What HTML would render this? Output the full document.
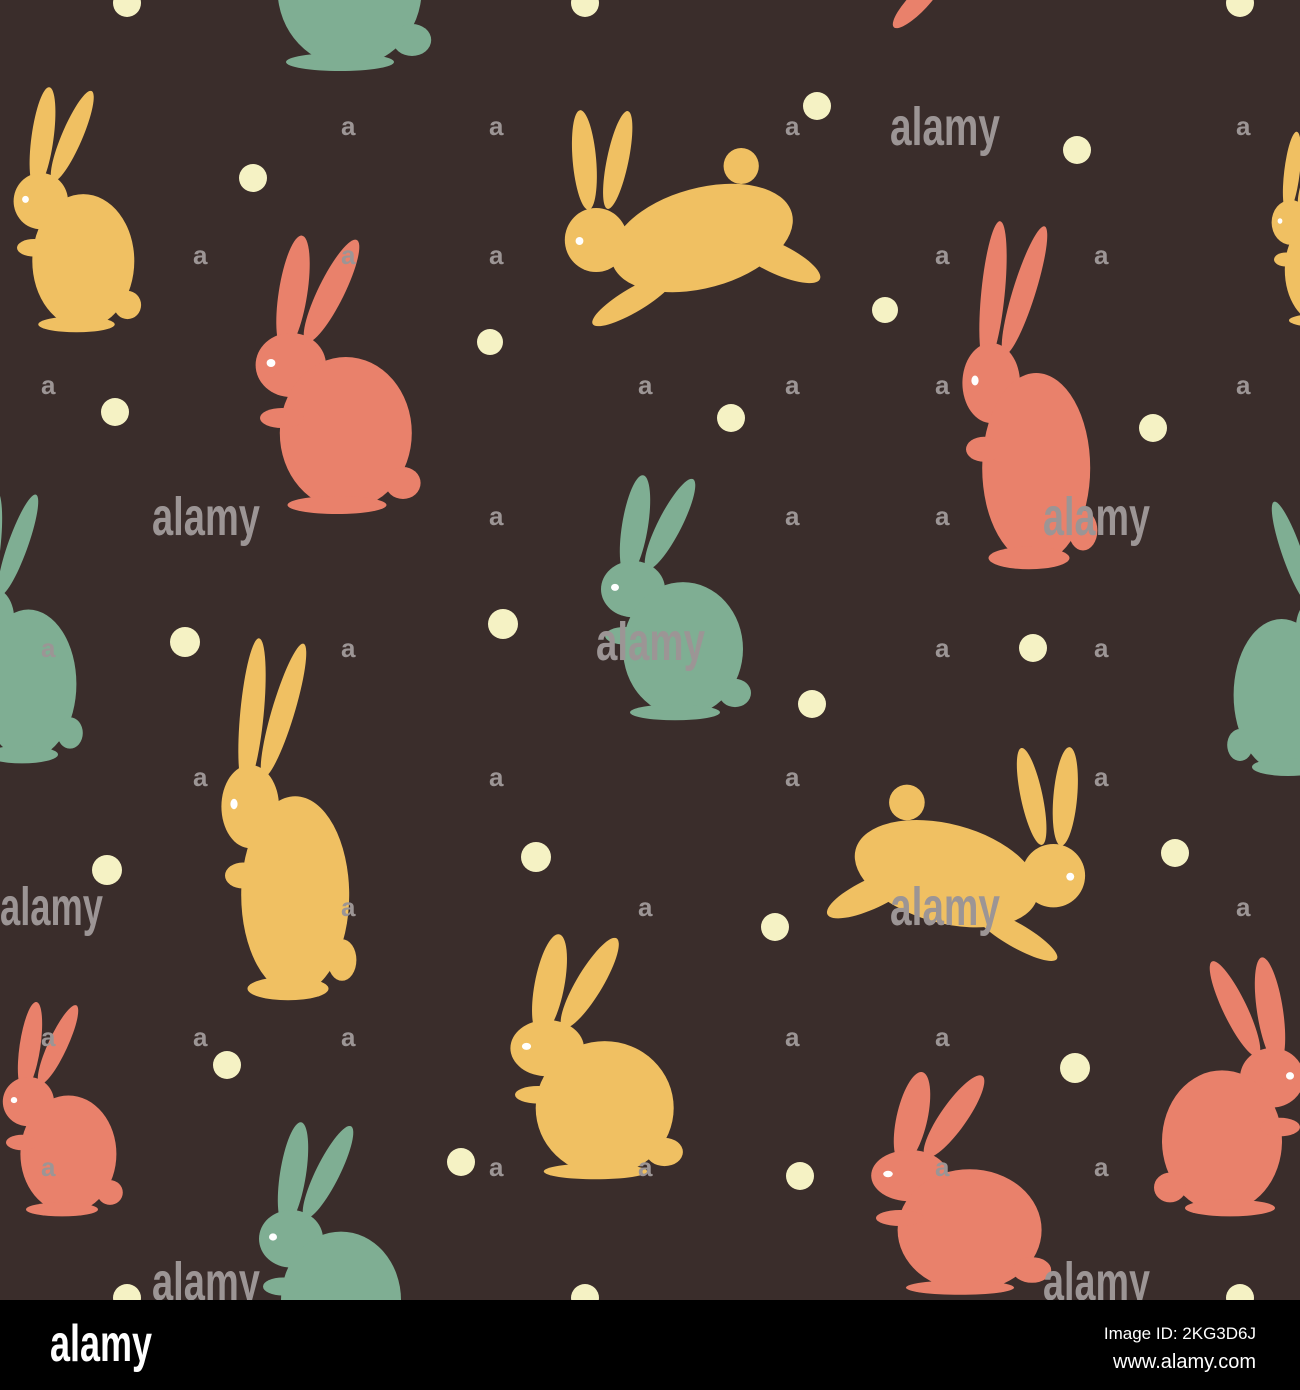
<!DOCTYPE html>
<html><head><meta charset="utf-8"><style>
html,body{margin:0;padding:0;width:1300px;height:1390px;overflow:hidden;background:#000}
svg{display:block}
.wm{font-family:"Liberation Sans Narrow","Liberation Sans",sans-serif;font-weight:bold;fill:#9c9595}
</style></head><body>
<svg width="1300" height="1390" viewBox="0 0 1300 1390" xmlns="http://www.w3.org/2000/svg">
<defs>
<g id="sit">
<ellipse cx="50" cy="60" rx="13" ry="58" transform="rotate(8 50 60)"/>
<ellipse cx="85" cy="58" rx="12" ry="56" transform="rotate(24 85 58)"/>
<circle cx="48" cy="132" r="32"/>
<ellipse cx="98" cy="200" rx="60" ry="76"/>
<circle cx="150" cy="250" r="16"/>
<ellipse cx="90" cy="272" rx="45" ry="9"/>
<ellipse cx="40" cy="185" rx="20" ry="10"/>
<circle cx="30" cy="130" r="4" fill="#fff"/>
</g>
<g id="jump">
<ellipse cx="30" cy="52" rx="12" ry="50" transform="rotate(-5 30 52)"/>
<ellipse cx="64" cy="52" rx="11" ry="50" transform="rotate(12 64 52)"/>
<circle cx="42" cy="132" r="32"/>
<ellipse cx="150" cy="130" rx="95" ry="50" transform="rotate(-15 150 130)"/>
<ellipse cx="225" cy="150" rx="50" ry="15" transform="rotate(25 225 150)"/>
<ellipse cx="80" cy="192" rx="48" ry="12" transform="rotate(-30 80 192)"/>
<circle cx="190" cy="58" r="18"/>
<circle cx="25" cy="133" r="4" fill="#fff"/>
</g>
</defs>
<rect width="1300" height="1300" fill="#3a2d2b"/>
<g fill="#f5f2c4">
<circle cx="127" cy="3" r="14"/><circle cx="585" cy="3" r="14"/><circle cx="1240" cy="3" r="14"/>
<circle cx="817" cy="106" r="14"/><circle cx="1077" cy="150" r="14"/><circle cx="253" cy="178" r="14"/>
<circle cx="885" cy="310" r="13"/><circle cx="490" cy="342" r="13"/><circle cx="115" cy="412" r="14"/>
<circle cx="731" cy="418" r="14"/><circle cx="1153" cy="428" r="14"/><circle cx="503" cy="624" r="15"/>
<circle cx="185" cy="642" r="15"/><circle cx="1033" cy="648" r="14"/><circle cx="812" cy="704" r="14"/>
<circle cx="107" cy="870" r="15"/><circle cx="536" cy="857" r="15"/><circle cx="1175" cy="853" r="14"/>
<circle cx="775" cy="927" r="14"/><circle cx="227" cy="1065" r="14"/><circle cx="1075" cy="1068" r="15"/>
<circle cx="461" cy="1162" r="14"/><circle cx="800" cy="1176" r="14"/>
<circle cx="127" cy="1298" r="14"/><circle cx="585" cy="1298" r="14"/><circle cx="1240" cy="1298" r="14"/>
</g>
<!-- bunnies -->
<use href="#sit" fill="#7fae93" transform="translate(232,-210) scale(1.2,1)"/>
<use href="#sit" fill="#f0c062" transform="translate(0,85) scale(0.85,0.88)"/>
<use href="#jump" fill="#f0c062" transform="translate(555,108) scale(0.98,1)"/>
<use href="#sit" fill="#e9816b" transform="translate(238,233) scale(1.1,1)"/>
<use href="#sit" fill="#e9816b" transform="translate(948,218) scale(0.9,1.25)"/>
<use href="#sit" fill="#7fae93" transform="translate(585,473) scale(1,0.88)"/>
<use href="#sit" fill="#7fae93" transform="translate(-50,488) scale(0.8,0.98)"/>
<use href="#sit" fill="#7fae93" transform="translate(1360,495) scale(-0.8,1)"/>
<use href="#sit" fill="#f0c062" transform="translate(207,635) scale(0.9,1.3)"/>
<use href="#jump" fill="#f0c062" transform="translate(1095,745) scale(-0.99,0.99)"/>
<use href="#sit" fill="#f0c062" transform="translate(492,932) scale(1.15,0.88)"/>
<use href="#sit" fill="#e9816b" transform="translate(-10,1000) scale(0.8,0.77)"/>
<use href="#sit" fill="#7fae93" transform="translate(243,1120) scale(1,0.9)"/>
<use href="#sit" fill="#e9816b" transform="translate(852,1070) scale(1.2,0.8)"/>
<use href="#sit" fill="#e9816b" transform="translate(1320,955) scale(-1,0.93)"/>
<use href="#jump" fill="#e9816b" transform="translate(870,-190) scale(0.6,1)"/>
<use href="#sit" fill="#f0c062" transform="translate(1262,130) scale(0.6,0.7)"/>
<!-- watermarks -->
<g class="wm" font-size="54">
<text x="152" y="535" textLength="108" lengthAdjust="spacingAndGlyphs">alamy</text>
<text x="0" y="925" textLength="103" lengthAdjust="spacingAndGlyphs">alamy</text>
<text x="890" y="145" textLength="110" lengthAdjust="spacingAndGlyphs">alamy</text>
<text x="1043" y="535" textLength="107" lengthAdjust="spacingAndGlyphs">alamy</text>
<text x="596" y="660" textLength="109" lengthAdjust="spacingAndGlyphs">alamy</text>
<text x="890" y="925" textLength="110" lengthAdjust="spacingAndGlyphs">alamy</text>
<text x="152" y="1300" textLength="108" lengthAdjust="spacingAndGlyphs">alamy</text>
<text x="1043" y="1300" textLength="107" lengthAdjust="spacingAndGlyphs">alamy</text>
</g>
<g class="wm" font-size="26">
<text x="341" y="135">a</text><text x="489" y="135">a</text><text x="785" y="135">a</text><text x="1236" y="135">a</text>
<text x="193" y="264">a</text><text x="341" y="264">a</text><text x="489" y="264">a</text><text x="935" y="264">a</text><text x="1094" y="264">a</text>
<text x="41" y="394">a</text><text x="638" y="394">a</text><text x="785" y="394">a</text><text x="935" y="394">a</text><text x="1236" y="394">a</text>
<text x="489" y="525">a</text><text x="785" y="525">a</text><text x="935" y="525">a</text>
<text x="41" y="657">a</text><text x="341" y="657">a</text><text x="935" y="657">a</text><text x="1094" y="657">a</text>
<text x="193" y="786">a</text><text x="489" y="786">a</text><text x="785" y="786">a</text><text x="1094" y="786">a</text>
<text x="341" y="916">a</text><text x="638" y="916">a</text><text x="1236" y="916">a</text>
<text x="41" y="1046">a</text><text x="193" y="1046">a</text><text x="341" y="1046">a</text><text x="785" y="1046">a</text><text x="935" y="1046">a</text>
<text x="41" y="1176">a</text><text x="489" y="1176">a</text><text x="638" y="1176">a</text><text x="935" y="1176">a</text><text x="1094" y="1176">a</text>
</g>
<!-- footer -->
<rect y="1300" width="1300" height="90" fill="#000"/>
<text x="50" y="1361" font-family="'Liberation Sans Narrow','Liberation Sans',sans-serif" font-weight="bold" font-size="52" fill="#fff" textLength="102" lengthAdjust="spacingAndGlyphs">alamy</text>
<text x="1256" y="1339" text-anchor="end" font-family="'Liberation Sans Narrow','Liberation Sans',sans-serif" font-size="17" fill="#fff">Image ID: 2KG3D6J</text>
<text x="1256" y="1368" text-anchor="end" font-family="'Liberation Sans Narrow','Liberation Sans',sans-serif" font-size="20" fill="#fff">www.alamy.com</text>
</svg>
</body></html>
